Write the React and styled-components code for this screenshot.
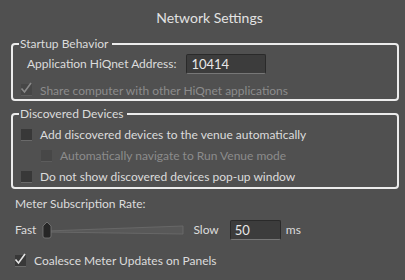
import React from "react";
import styled, { createGlobalStyle } from "styled-components";

const Global = createGlobalStyle`
    html, body {
        margin: 0;
        padding: 0;
        background-color: #505050;
    }
    body {
        font-family: 'Lato', 'Noto Sans', sans-serif;
        color: #dcdcdc;
    }
`

export default function App() {
    return (
        <Main>
            <Global />
            <Titulo>Network Settings</Titulo>

            <Grupo>
                <Legenda>Startup Behavior</Legenda>
                <Linha>
                    <Rotulo>Application HiQnet Address:</Rotulo>
                    <Campo width="80px" defaultValue="10414" />
                </Linha>
                <Opcao checked disabled compact>Share computer with other HiQnet applications</Opcao>
            </Grupo>

            <Grupo second>
                <Legenda>Discovered Devices</Legenda>
                <Opcao>Add discovered devices to the venue automatically</Opcao>
                <Opcao disabled indent>Automatically navigate to Run Venue mode</Opcao>
                <Opcao>Do not show discovered devices pop-up window</Opcao>
            </Grupo>

            <Secao>
                <Rotulo>Meter Subscription Rate:</Rotulo>
                <SliderLinha>
                    <Rotulo>Fast</Rotulo>
                    <Slider />
                    <Rotulo>Slow</Rotulo>
                    <Campo width="51px" defaultValue="50" />
                    <Rotulo>ms</Rotulo>
                </SliderLinha>
                <Opcao checked>Coalesce Meter Updates on Panels</Opcao>
            </Secao>
        </Main>
    )
}

function Opcao({ checked, disabled, indent, compact, children }) {
    return (
        <OpcaoLinha indent={indent} disabled={disabled} compact={compact}>
            <Caixa disabled={disabled}>
                {checked && (
                    <svg width="13" height="12" viewBox="0 0 13 12">
                        <path d="M1.5 6.5 L4.5 10 L11 1" fill="none"
                            stroke={disabled ? "#8a8a8a" : "#e4e4e4"} strokeWidth="1.6" />
                    </svg>
                )}
            </Caixa>
            <span>{children}</span>
        </OpcaoLinha>
    )
}

function Slider() {
    return (
        <Trilha>
            <svg width="146" height="18" viewBox="0 0 146 18">
                <polygon points="6,10 142,5 142,13 6,11" fill="#585858" stroke="#6c6c6c" strokeWidth="0.8" />
                <path d="M2 5 L6 1 L10 5 L10 15 Q10 17 8 17 L4 17 Q2 17 2 15 Z"
                    fill="#262626" stroke="#7a7a7a" strokeWidth="0.8" />
            </svg>
        </Trilha>
    )
}

const Main = styled.div`
    width: 405px;
    height: 280px;
    box-sizing: border-box;
    padding: 8px 6px 0 11px;
    display: flex;
    flex-direction: column;
    font-size: 12px;
`

const Titulo = styled.div`
    font-size: 14px;
    line-height: 20px;
    text-align: center;
    color: #e2e2e2;
    padding-left: 9px;
    margin-bottom: 8px;
`

const Grupo = styled.fieldset`
    margin: ${p => (p.second ? "5px" : "0")} 0 0 0;
    padding: ${p => (p.second ? "2px" : "1px")} 8px 0 8px;
    border: 2px solid #ececec;
    border-radius: 4px;
    display: flex;
    flex-direction: column;
`

const Legenda = styled.legend`
    padding: 0 4px 0 1px;
    margin-left: -2px;
    line-height: 16px;
    color: #dcdcdc;
`

const Linha = styled.div`
    display: flex;
    align-items: center;
    gap: 10px;
    padding-left: 6px;
    height: 22px;
    margin-bottom: 6px;
`

const Rotulo = styled.span`
    line-height: 18px;
    white-space: nowrap;
`

const Campo = styled.input`
    width: ${p => p.width};
    height: 20px;
    box-sizing: border-box;
    background-color: #3c3c3c;
    border: 1px solid #2a2a2a;
    border-bottom-color: #777;
    border-radius: 2px;
    color: #e8e8e8;
    font-family: 'Lato', 'Noto Sans', sans-serif;
    font-size: 13px;
    padding: 0 4px;
    outline: none;
`

const OpcaoLinha = styled.div`
    display: flex;
    align-items: center;
    gap: 8px;
    height: ${p => (p.compact ? "18px" : "21px")};
    padding-left: ${p => (p.indent ? "20px" : "0")};
    color: ${p => (p.disabled ? "#8c8c8c" : "#dcdcdc")};
`

const Caixa = styled.span`
    width: 11px;
    height: 11px;
    flex: none;
    display: flex;
    align-items: flex-end;
    justify-content: center;
    background-color: ${p => (p.disabled ? "#474747" : "#383838")};
    border-bottom: 1px solid ${p => (p.disabled ? "#5c5c5c" : "#6a6a6a")};

    svg {
        margin-bottom: 1px;
        overflow: visible;
    }
`

const Secao = styled.div`
    display: flex;
    flex-direction: column;
    padding-left: 4px;
    padding-top: 6px;
`

const SliderLinha = styled.div`
    display: flex;
    align-items: center;
    height: 24px;
    margin-top: 5px;
    margin-bottom: 8px;

    & > span:nth-of-type(2) {
        margin: 0 11px 0 6px;
    }
    & > span:last-child {
        margin-left: 5px;
    }
`

const Trilha = styled.div`
    display: flex;
    align-items: center;
    margin-left: 5px;
`
